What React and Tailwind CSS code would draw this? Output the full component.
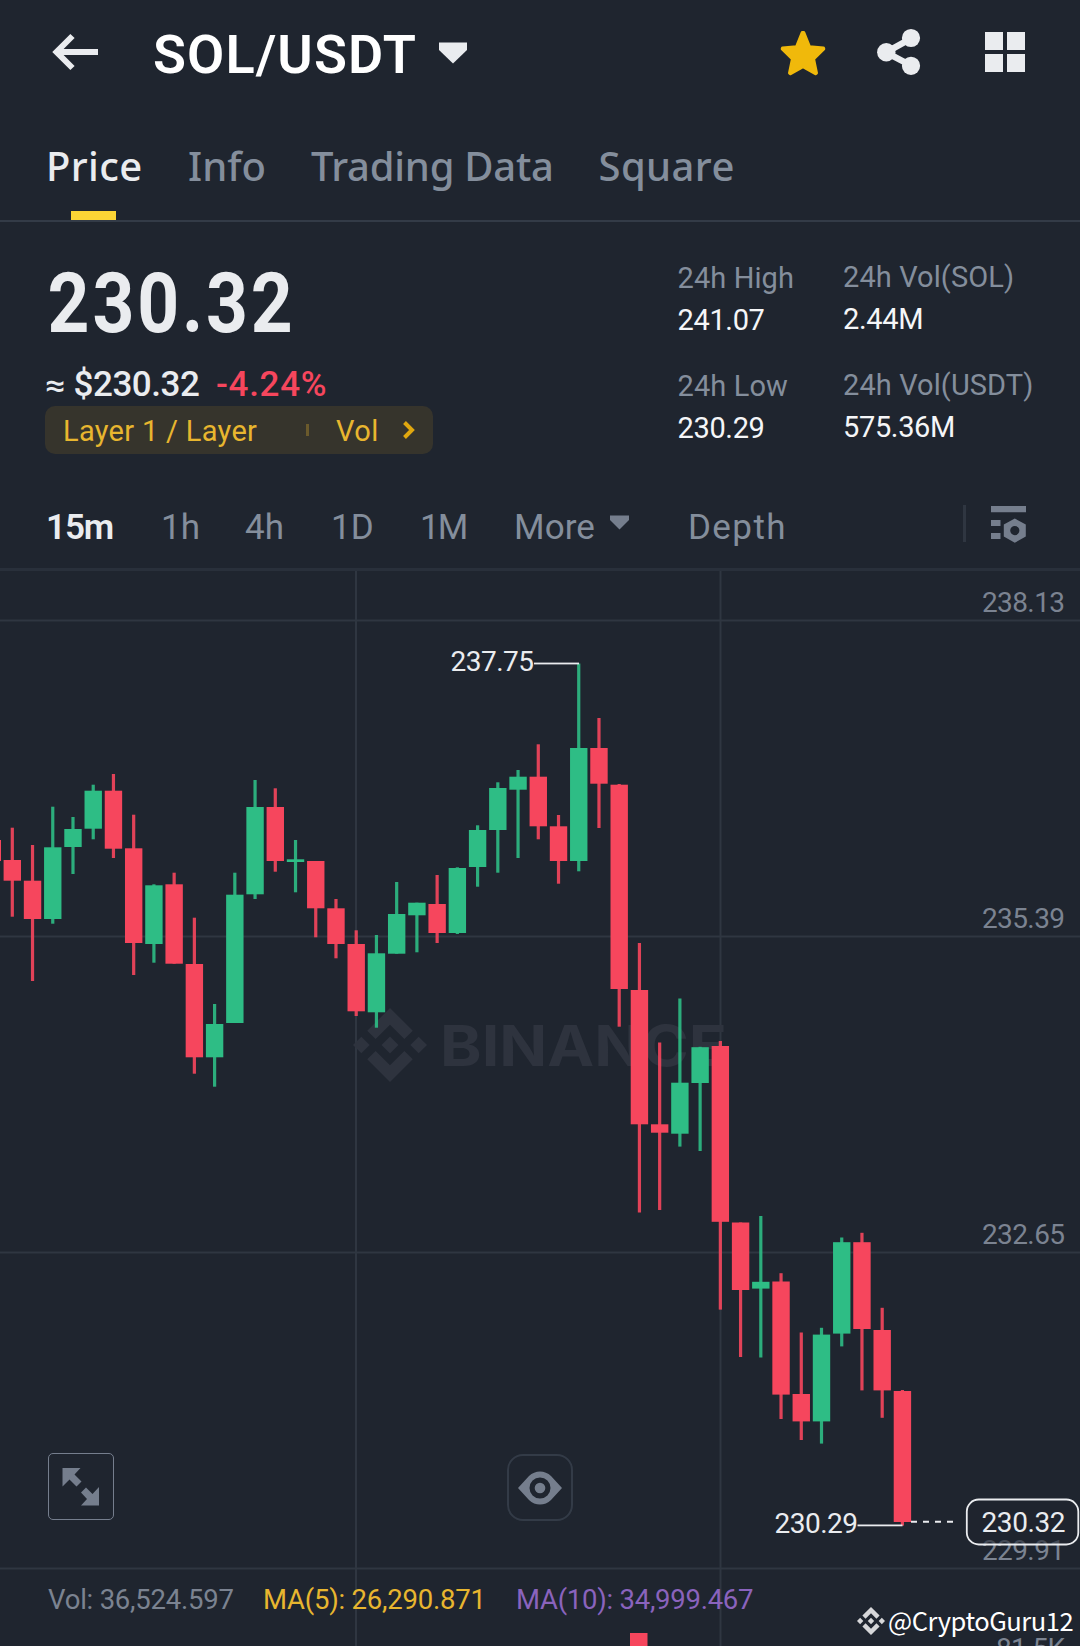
const UP = "#2ebd85";
const DOWN = "#f6465d";

// [direction, high, low, bodyTop, bodyBottom] in chart pixels, one entry per 15 minute candle
const CANDLES = [
  ["down", 827.7, 916.7, 860, 880.7],
  ["down", 845, 981, 880.7, 919],
  ["up", 806.7, 923.7, 847.3, 919],
  ["up", 817, 874, 829, 847],
  ["up", 784.7, 839.3, 790.7, 828.7],
  ["down", 774, 858, 790.7, 848.7],
  ["down", 814.7, 975, 848.3, 943],
  ["up", 884.3, 962.7, 885.3, 944],
  ["down", 872.7, 963.7, 884.3, 963.7],
  ["down", 917.7, 1073.7, 964, 1057.3],
  ["up", 1004, 1086.7, 1024, 1057.3],
  ["up", 872.7, 1023, 894.7, 1023],
  ["up", 780, 899, 807, 894.3],
  ["down", 788.3, 871.7, 807, 861],
  ["up", 840, 892.3, 859.3, 862],
  ["down", 861, 937.3, 861, 908.3],
  ["down", 899, 958.3, 908.3, 944],
  ["down", 930.3, 1016, 944, 1011.3],
  ["up", 935, 1027.7, 953.3, 1012.3],
  ["up", 882, 953.7, 914, 953.7],
  ["up", 902.7, 952.3, 902.7, 915.3],
  ["down", 875, 943, 904, 933],
  ["up", 867.3, 934, 868, 933],
  ["up", 825.3, 886.7, 830, 867],
  ["up", 782.3, 872.7, 788, 830],
  ["up", 770, 858, 776.7, 789.7],
  ["down", 744.3, 839.3, 776.7, 826.3],
  ["down", 815, 883.7, 826.3, 861],
  ["up", 663.5, 871.3, 748, 861],
  ["down", 718, 828, 748, 783.7],
  ["down", 784, 1026.7, 784.7, 989],
  ["down", 943, 1212.5, 990, 1124.3],
  ["down", 1042.5, 1210, 1124.3, 1132.7],
  ["up", 998.5, 1146.6, 1082.7, 1133.7],
  ["up", 1046.8, 1151, 1047.2, 1083],
  ["down", 1041, 1309.6, 1046, 1221.8],
  ["down", 1222.5, 1357, 1222.5, 1290],
  ["up", 1216, 1357.5, 1281.8, 1288.6],
  ["down", 1273.2, 1419, 1281.5, 1394.6],
  ["down", 1332.5, 1440, 1394, 1421.4],
  ["up", 1327.8, 1443.6, 1334.6, 1421.4],
  ["up", 1237.5, 1346.4, 1242.2, 1333.6],
  ["down", 1232.8, 1390.4, 1242.2, 1329],
  ["down", 1307.8, 1417.8, 1330, 1390.4],
  ["down", 1390, 1525.6, 1391, 1522],
];

function BinanceMark(props) {
  return (
    <svg viewBox="0 0 126.6 126.6" fill="currentColor" {...props}>
      <path d="M38.7 53.2 63.3 28.6 87.9 53.2 102.2 38.9 63.3 0 24.4 38.9z" />
      <path d="M0 63.3 14.3 49 28.6 63.3 14.3 77.6z" />
      <path d="M38.7 73.4 63.3 98 87.9 73.4 102.2 87.7 63.3 126.6 24.4 87.7z" />
      <path d="M98 63.3 112.3 49 126.6 63.3 112.3 77.6z" />
      <path d="M63.3 48.8 77.8 63.3 63.3 77.8 48.8 63.3z" />
    </svg>
  );
}

function Header() {
  return (
    <header className="flex h-[104px] items-start text-[#eaecef]">
      <svg viewBox="0 0 48 38" className="mt-[33px] ml-[51px] h-[38px] w-12" fill="none" stroke="currentColor" strokeWidth="6">
        <path d="M7 19H47" />
        <path d="M21.5 3 5.5 19l16 16" />
      </svg>
      <h1 className="mt-[28px] ml-[54px] w-[286px] whitespace-nowrap text-[54px] leading-none font-semibold tracking-[1.1px] text-white">SOL/USDT</h1>
      <svg viewBox="0 0 28 22" className="mt-[42px] h-[22px] w-7" fill="currentColor">
        <path d="M0 .5h28v7.5L14 21.5 0 8z" />
      </svg>
      <svg viewBox="0 0 46 48" className="mt-[30px] ml-[313px] h-12 w-[46px] text-[#f0b90b]" fill="currentColor" stroke="currentColor" strokeWidth="3" strokeLinejoin="round">
        <path d="M22.2 2.5h1.6L29.5 16.8 43.5 18 43.8 19 33.6 29 36.5 43 35.5 43.8 23 36.8 10.5 43.8 9.5 43 12.4 29 2.2 19 2.5 18 16.5 16.8z" />
      </svg>
      <svg viewBox="0 0 44 48" className="mt-[28px] ml-[51px] h-12 w-11" fill="currentColor">
        <path d="M9 24.3 34 10.5M9 24.3 34 37.5" stroke="currentColor" strokeWidth="6.5" />
        <circle cx="9.3" cy="24.3" r="9.2" />
        <circle cx="34" cy="10" r="9.1" />
        <circle cx="34" cy="37.8" r="9.1" />
      </svg>
      <div className="mt-8 ml-[64px] grid grid-cols-2 gap-x-[4px] gap-y-[4px]">
        <i className="h-[18px] w-[18px] bg-current" />
        <i className="h-[18px] w-[18px] bg-current" />
        <i className="h-[18px] w-[18px] bg-current" />
        <i className="h-[18px] w-[18px] bg-current" />
      </div>
    </header>
  );
}

function Tabs() {
  return (
    <nav className="flex h-[118px] border-b-2 border-[#333b47] pt-[42px] pl-[46px] font-['Noto_Sans',sans-serif] text-[40px] leading-none font-medium whitespace-nowrap text-[#848e9c]">
      <div className="flex w-[142px] flex-col text-[#eaecef]">
        <span className="tracking-[0.4px]">Price</span>
        <i className="mt-[25px] ml-[25px] h-[9px] w-[45px] bg-[#fcd535]" />
      </div>
      <span className="w-[123px]">Info</span>
      <span className="w-[287.5px] tracking-[-0.25px]">Trading Data</span>
      <span className="tracking-[0.4px]">Square</span>
    </nav>
  );
}

function Stat({ label, value }) {
  return (
    <div className="h-[108px] whitespace-nowrap">
      <div className="tracking-[0.1px] text-[#848e9c]">{label}</div>
      <div className="mt-[13px] tracking-[-0.35px] text-[#f5f6f8]">{value}</div>
    </div>
  );
}

function Summary() {
  return (
    <section className="flex h-[264px]">
      <div className="w-[677.5px] pt-[40px] pl-[45px]">
        <div className="h-[84px] origin-left scale-x-[0.87] pl-[3px] text-[84px] leading-none font-bold tracking-[3.3px] whitespace-nowrap text-[#eaecef]">230.32</div>
        <div className="mt-[21px] flex h-[35px] text-[35px] leading-none font-medium whitespace-nowrap text-[#eaecef]">
          <span className="w-[28.5px]">
            <span className="inline-block origin-left scale-x-[1.15] text-[31px]">≈</span>
          </span>
          <span className="w-[142.5px] tracking-[-0.45px]">$230.32</span>
          <span className="tracking-[0.7px] text-[#f6465d]">-4.24%</span>
        </div>
        <div className="mt-[4px] flex h-[48px] w-[388px] items-start rounded-[10px] bg-[#36342c] pt-[11px] pl-[18px] text-[29px] leading-none whitespace-nowrap text-[#e8b62f]">
          <span className="w-[243px] tracking-[0.3px]">Layer 1 / Layer</span>
          <i className="mt-[7px] h-3 w-[3px] bg-[#6b5a2c]" />
          <span className="ml-[27px] w-[67px] tracking-[0.4px]">Vol</span>
          <svg viewBox="0 0 12 18" className="mt-[4px] h-[18px] w-3" fill="none" stroke="#e0a70f" strokeWidth="4">
            <path d="m1.5 1.5 7.5 7.5-7.5 7.5" />
          </svg>
        </div>
      </div>
      <div className="grid grid-cols-[165.5px_auto] content-start text-[29px] leading-none">
        <div className="pt-[42px]">
          <Stat label="24h High" value="241.07" />
          <Stat label="24h Low" value="230.29" />
        </div>
        <div className="pt-[41px]">
          <Stat label="24h Vol(SOL)" value="2.44M" />
          <Stat label="24h Vol(USDT)" value="575.36M" />
        </div>
      </div>
    </section>
  );
}

function Intervals() {
  return (
    <nav className="flex h-[82px] items-start pt-[23.5px] pl-[46px] text-[35px] leading-none whitespace-nowrap text-[#848e9c]">
      <span className="w-[115px] font-semibold tracking-[-1.1px] text-[#eaecef]">15m</span>
      <span className="w-[84px]">1h</span>
      <span className="w-[86px]">4h</span>
      <span className="w-[89px]">1D</span>
      <span className="w-[94px] tracking-[-2px]">1M</span>
      <span className="w-[96px] tracking-[0.1px]">More</span>
      <svg viewBox="0 0 19 15" className="mt-[5px] h-[15px] w-[19px]" fill="#757e8d">
        <path d="M0 .5h19v4.5L9.5 14.5 0 5z" />
      </svg>
      <span className="ml-[59px] w-[275px] tracking-[1.4px]">Depth</span>
      <i className="-mt-[5px] h-[37px] w-[3px] bg-[#2f3641]" />
      <svg viewBox="0 0 35 37" className="-mt-[4px] ml-[25px] h-[37px] w-[35px]" fill="#757e8d">
        <path d="M0 0h35v6.3H0zM0 14h9.5v6H0zM0 27h9.5v6H0z" />
        <path fillRule="evenodd" d="M23.8 12.5 34.8 18.5V30.5L23.8 36.7 12.8 30.5V18.5zM23.8 20a4.6 4.6 0 1 0 0 9.2 4.6 4.6 0 0 0 0-9.2z" />
      </svg>
    </nav>
  );
}

function Candle({ index, data }) {
  const [dir, high, low, top, bottom] = data;
  const x = 12.3 + index * 20.23;
  return (
    <g fill={dir === "up" ? UP : DOWN}>
      <rect x={x - 1.6} y={high} width="3.2" height={low - high} opacity="0.9" />
      <rect x={x - 8.7} y={top} width="17.4" height={bottom - top} />
    </g>
  );
}

function Chart() {
  return (
    <section className="relative h-[1078px] overflow-hidden">
      <svg viewBox="0 568 1080 1078" className="block h-[1078px] w-[1080px]" fontFamily="Roboto, sans-serif" fontSize="28">
        <rect x="0" y="568" width="1080" height="3" fill="#29303b" />
        <g fill="#2f3641">
          <rect x="355" y="571" width="2" height="1075" />
          <rect x="719.5" y="571" width="2" height="1075" />
          <rect x="0" y="619.5" width="1080" height="2" />
          <rect x="0" y="935.5" width="1080" height="2" />
          <rect x="0" y="1251.5" width="1080" height="2" />
          <rect x="0" y="1567.5" width="1080" height="2" />
        </g>
        <g color="#2e333e" fill="#2e333e">
          <BinanceMark x="353" y="1008" width="74" height="74" />
          <text x="440" y="1066" fontFamily="Inter, sans-serif" fontWeight="700" fontSize="56.5" textLength="287" lengthAdjust="spacingAndGlyphs">BINANCE</text>
        </g>

        <g fill="#7b8391">
          <text x="982" y="612" textLength="83">238.13</text>
          <text x="982" y="928" textLength="83">235.39</text>
          <text x="982" y="1244" textLength="83">232.65</text>
          <text x="982" y="1560" textLength="83">229.91</text>
          <text x="996" y="1658" textLength="69">81.5K</text>
        </g>

        <rect x="0" y="840" width="1" height="21" fill={DOWN} />
        {CANDLES.map((c, i) => (
          <Candle key={i} index={i} data={c} />
        ))}
        <rect x="630" y="1633" width="17.5" height="13" fill={DOWN} />

        <g fill="#eaecef">
          <text x="450.5" y="671" textLength="83.5">237.75</text>
          <rect x="534" y="662.6" width="45" height="1.8" />
          <text x="774.5" y="1533" textLength="83.5">230.29</text>
          <rect x="857.5" y="1524.5" width="45" height="1.8" />
        </g>
        <path d="M911 1521.8H954" stroke="#eaecef" strokeWidth="2" strokeDasharray="6 6" />
        <rect x="966.8" y="1499.5" width="111.5" height="45" rx="12" fill="#1f252f" fillOpacity="0.6" stroke="#eaecef" strokeWidth="1.8" />
        <text x="981.5" y="1532" textLength="84" fill="#eaecef">230.32</text>

        <g fontSize="27.5">
          <text x="48" y="1609" textLength="186" fill="#7b8391">Vol: 36,524.597</text>
          <text x="263" y="1609" textLength="223" fill="#e8b62f">MA(5): 26,290.871</text>
          <text x="516" y="1609" textLength="237.5" fill="#8a63bd">MA(10): 34,999.467</text>
        </g>
      </svg>

      <button className="absolute top-[885px] left-[48px] h-[67px] w-[66px] rounded-[5px] border-[1.5px] border-[#757e8d]">
        <svg viewBox="0 0 66 67" className="absolute -top-px -left-px h-[67px] w-[66px]" fill="#757e8d">
          <path d="M14.5 15H32.5L26.5 21.5 33.5 28.5 28.5 33.5 21.5 26.5 14.5 33.5z" />
          <path d="M51 52.5H33L39 46 33 39.5 38 34.5 44.5 41 51 34z" />
        </svg>
      </button>
      <button className="absolute top-[886px] left-[507px] h-[67px] w-[66px] rounded-[16px] border-2 border-[#333b47]">
        <svg viewBox="0 0 46 36" className="mx-auto h-9 w-[46px]" fill="#757e8d">
          <path fillRule="evenodd" d="M1 18 12 6C18 0 28 0 34 6L45 18 34 30C28 36 18 36 12 30zM23 7.5a10.5 10.5 0 1 0 0 21 10.5 10.5 0 0 0 0-21z" />
          <circle cx="23" cy="18" r="5.3" />
        </svg>
      </button>

      <div className="absolute top-[1037px] left-[857px] flex items-center gap-[3px] text-white">
        <BinanceMark className="h-7 w-7 text-[#d6d7d9]" />
        <span className="-mt-px font-['Noto_Sans_CJK_SC',sans-serif] text-[25.5px] leading-[32px] font-normal tracking-[-0.45px] whitespace-nowrap">@CryptoGuru12</span>
      </div>
    </section>
  );
}

export default function App() {
  return (
    <main className="h-[1646px] w-[1080px] overflow-hidden bg-[#1f252f] font-['Roboto',sans-serif]">
      <Header />
      <Tabs />
      <Summary />
      <Intervals />
      <Chart />
    </main>
  );
}
